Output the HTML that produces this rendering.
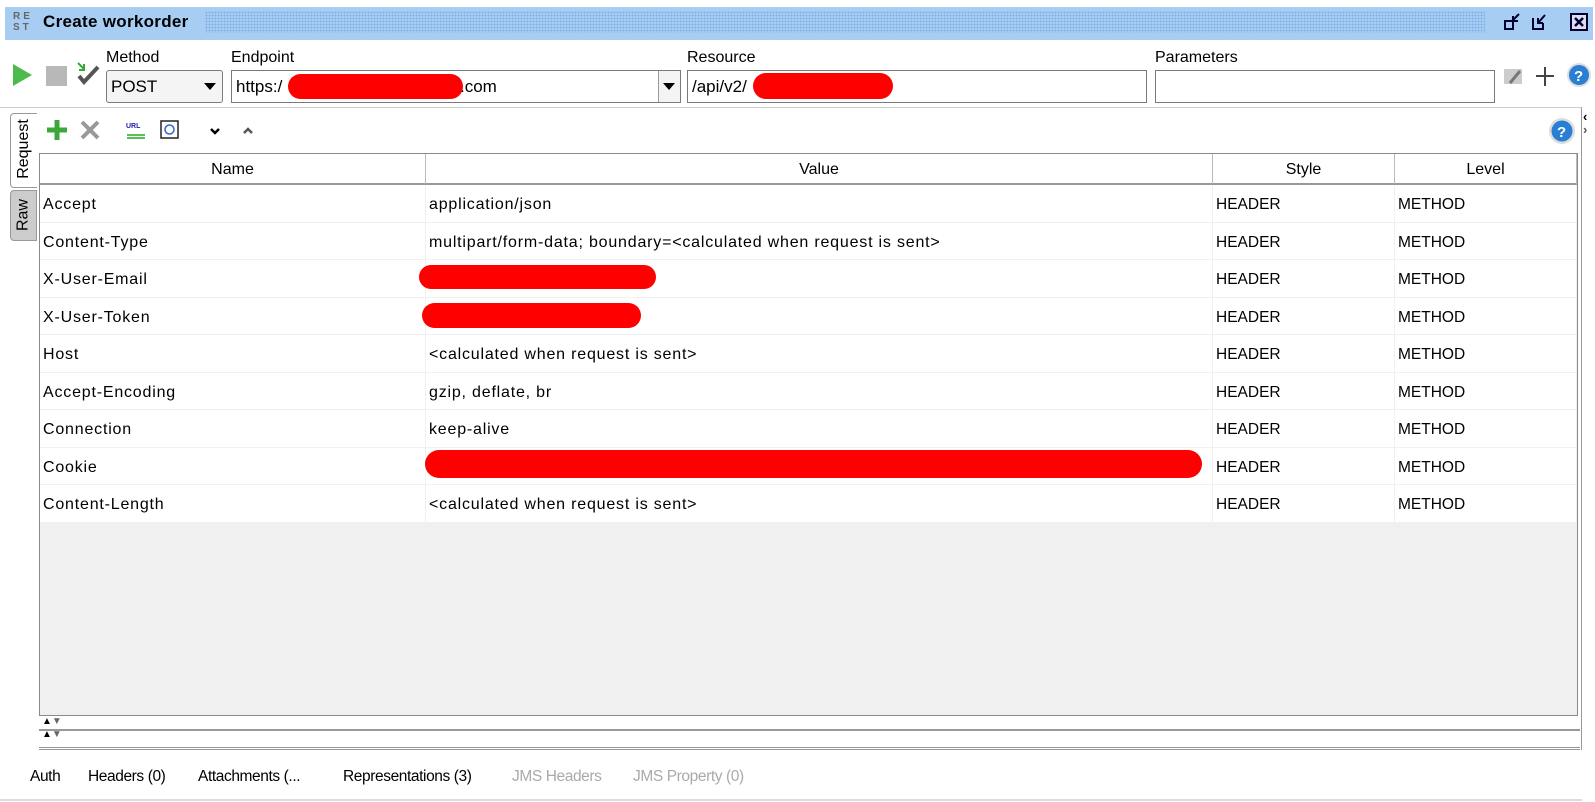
<!DOCTYPE html>
<html><head><meta charset="utf-8"><style>
*{box-sizing:border-box;margin:0;padding:0}
body{width:1595px;height:802px;background:#fff;font-family:"Liberation Sans",sans-serif;font-size:15px;color:#000;position:relative;overflow:hidden}
.a{position:absolute}
.title{left:5px;top:7px;width:1588px;height:33px;background:#a8cdf2}
.hatch{left:205px;top:11px;width:1280px;height:22px;background-image:radial-gradient(#7fb0e6 0.8px,transparent 1px);background-size:3px 3px}
.inp{border:1px solid #7a7a7a;background:#fff;height:33px;top:70px}
.tbl{left:39px;top:153px;width:1539px;height:563px;border:1px solid #8a8a8a;background:#f0f0f0}
.hdr{position:absolute;top:0;height:31px;border-bottom:2px solid #999;border-right:1px solid #bbb;background:#fff;text-align:center;line-height:31px;font-size:16px}
.row{position:absolute;left:0;width:1537px;height:37.5px;background:#fff;border-bottom:1px solid #f0f0f0}
.c{position:absolute;top:0;line-height:39px;padding-left:3px;border-right:1px solid #f0f0f0;height:100%;white-space:nowrap}
.w{font-size:16px;letter-spacing:0.8px}
.red{position:absolute;background:#f00;border-radius:14px}
.bt{top:768px;font-size:15.5px;letter-spacing:-0.4px}
</style></head><body>
<div class="a title"></div>
<div class="a hatch"></div>
<div class="a" style="left:13px;top:11px;font-size:10px;line-height:11px;color:#666;letter-spacing:3px;font-weight:bold">RE<br>ST</div>
<div class="a" style="left:43px;top:12px;font-weight:bold;font-size:17px;letter-spacing:0.3px">Create workorder</div>
<svg class="a" style="left:1503px;top:10px" width="90" height="24">
<rect x="2" y="11" width="8" height="8" fill="none" stroke="#003" stroke-width="2"/><path d="M9 11 L16 4 M10 6 V11 H15" stroke="#003" stroke-width="2" fill="none"/>
<path d="M30 8 V19 H40 V13" stroke="#003" stroke-width="2" fill="none"/><path d="M35 13 L42 5 M35 8 V13 H40" stroke="#003" stroke-width="2" fill="none"/>
<rect x="68" y="4" width="16" height="16" fill="#dde" stroke="#003" stroke-width="2"/><path d="M72 8 L80 16 M80 8 L72 16" stroke="#003" stroke-width="2.5"/>
</svg>
<svg class="a" style="left:10px;top:60px" width="95" height="30">
<path d="M3 4 L22 15 L3 26Z" fill="#4cbb4c"/><rect x="36" y="6" width="21" height="20" fill="#b8b8b8"/>
<path d="M69 16 L74 22 L88 7" stroke="#555" stroke-width="4" fill="none"/><path d="M68 3 L74 9 M74 4 V10 H69" stroke="#3a3" stroke-width="2" fill="none"/>
</svg>
<div class="a" style="left:106px;top:49px;font-size:16px">Method</div>
<div class="a" style="left:231px;top:49px;font-size:16px">Endpoint</div>
<div class="a" style="left:687px;top:49px;font-size:16px">Resource</div>
<div class="a" style="left:1155px;top:49px;font-size:16px">Parameters</div>
<div class="a inp" style="left:106px;width:117px;border-radius:3px;background:#f4f4f4;padding:6px 4px;font-size:17px">POST<span style="position:absolute;right:6px;top:12px;border:6px solid transparent;border-top:7px solid #000;border-bottom:none"></span></div>
<div class="a inp" style="left:231px;width:450px;padding:6px 4px;font-size:17px">https:/<span style="position:absolute;left:228px">.com</span></div>
<div class="a" style="left:658px;top:71px;width:22px;height:31px;border-left:1px solid #999;background:#f4f4f4"><span style="position:absolute;left:4px;top:12px;border:6px solid transparent;border-top:7px solid #000;border-bottom:none"></span></div>
<div class="red" style="left:288px;top:74px;width:175px;height:25px"></div>
<div class="a inp" style="left:687px;width:460px;padding:6px 4px;font-size:17px">/api/v2/</div>
<div class="red" style="left:753px;top:73px;width:140px;height:26px"></div>
<div class="a inp" style="left:1155px;width:340px"></div>
<svg class="a" style="left:1500px;top:62px" width="95" height="30">
<path d="M4 7 H22 V22 H4Z" fill="#ccc"/><path d="M10 21 L20 9" stroke="#777" stroke-width="3"/>
<path d="M45 5 V24 M36 14 H54" stroke="#444" stroke-width="2"/>
<circle cx="79" cy="13" r="12" fill="#ddd"/><circle cx="79" cy="13" r="10" fill="#2a7fd4"/><text x="74" y="19" fill="#fff" font-size="15" font-weight="bold" font-family="Liberation Sans">?</text>
</svg>
<div class="a" style="left:0;top:107px;width:1582px;height:1px;background:#ccc"></div>
<div class="a" style="left:10px;top:113px;width:27px;height:75px;border:1px solid #999;border-right:none;background:#fff;border-radius:4px 0 0 4px"><div style="transform:rotate(-90deg);position:absolute;left:-22px;top:26px;width:70px;text-align:center;font-size:16px">Request</div></div>
<div class="a" style="left:10px;top:190px;width:27px;height:51px;border:1px solid #999;background:#ccc;border-radius:4px 0 0 4px"><div style="transform:rotate(-90deg);position:absolute;left:-10px;top:15px;width:45px;text-align:center;font-size:16px">Raw</div></div>
<svg class="a" style="left:44px;top:117px" width="220" height="26">
<path d="M13 3 V23 M3 13 H23" stroke="#3aa83a" stroke-width="5"/>
<path d="M38 5 L54 21 M54 5 L38 21" stroke="#999" stroke-width="4"/>
<text x="82" y="11" font-size="7" fill="#22a" font-weight="bold" font-family="Liberation Sans">URL</text><path d="M83 18 H101 M83 21 H101" stroke="#2a2" stroke-width="1.5"/>
<rect x="117" y="4" width="17" height="17" fill="#fff" stroke="#222" stroke-width="1.5"/><circle cx="125.5" cy="12.5" r="4.5" fill="none" stroke="#36c" stroke-width="1.5"/>
<path d="M167 12 L171 16 L175 12" stroke="#000" stroke-width="2.5" fill="none"/><path d="M200 16 L204 12 L208 16" stroke="#555" stroke-width="2.5" fill="none"/>
</svg>
<svg class="a" style="left:1548px;top:117px" width="28" height="28"><circle cx="14" cy="14" r="13" fill="#ddd"/><circle cx="14" cy="14" r="10.5" fill="#2a7fd4"/><text x="9" y="20" fill="#fff" font-size="15" font-weight="bold" font-family="Liberation Sans">?</text></svg>
<div class="a" style="left:1581px;top:107px;width:1px;height:643px;background:#999"></div>
<div class="a" style="left:1583px;top:110px;font-size:13px;font-weight:bold;line-height:13px">‹<br><span style="color:#555">›</span></div>
<div class="a tbl">
<div class="hdr" style="left:0;width:386px">Name</div>
<div class="hdr" style="left:386px;width:787px">Value</div>
<div class="hdr" style="left:1173px;width:182px">Style</div>
<div class="hdr" style="left:1355px;width:182px">Level</div>
<div id="rows"></div>
</div>
<div class="a" style="left:39px;top:716px;width:1541px;height:34px;border-bottom:3px double #999;background:#fff"></div>
<div class="a" style="left:39px;top:729px;width:1541px;height:2px;background:#999"></div>
<div class="a" style="left:42px;top:715px;font-size:10px;line-height:13px;font-weight:bold">▲<span style="color:#666">▼</span><br>▲<span style="color:#666">▼</span></div>
<div class="a bt" style="left:30px">Auth</div>
<div class="a bt" style="left:88px">Headers (0)</div>
<div class="a bt" style="left:198px">Attachments (...</div>
<div class="a bt" style="left:343px">Representations (3)</div>
<div class="a bt" style="left:512px;color:#aaa">JMS Headers</div>
<div class="a bt" style="left:633px;color:#aaa">JMS Property (0)</div>
<div class="a" style="left:0;top:799px;width:1582px;height:2px;background:#ddd"></div>
<script>
var d=[["Accept","application/json"],["Content-Type","multipart/form-data; boundary=&lt;calculated when request is sent&gt;"],["X-User-Email",""],["X-User-Token",""],["Host","&lt;calculated when request is sent&gt;"],["Accept-Encoding","gzip, deflate, br"],["Connection","keep-alive"],["Cookie",""],["Content-Length","&lt;calculated when request is sent&gt;"]];
var h="";d.forEach(function(r,i){h+='<div class="row" style="top:'+(31+i*37.5)+'px"><div class="c w" style="left:0;width:386px">'+r[0]+'</div><div class="c w" style="left:386px;width:787px">'+r[1]+'</div><div class="c" style="left:1173px;width:182px;font-size:15.5px">HEADER</div><div class="c" style="left:1355px;width:182px;font-size:15.5px">METHOD</div></div>'});
document.getElementById("rows").innerHTML=h;
</script>
<div class="red" style="left:419px;top:265px;width:237px;height:24px"></div>
<div class="red" style="left:422px;top:303px;width:219px;height:25px"></div>
<div class="red" style="left:425px;top:450px;width:777px;height:28px"></div>
</body></html>
